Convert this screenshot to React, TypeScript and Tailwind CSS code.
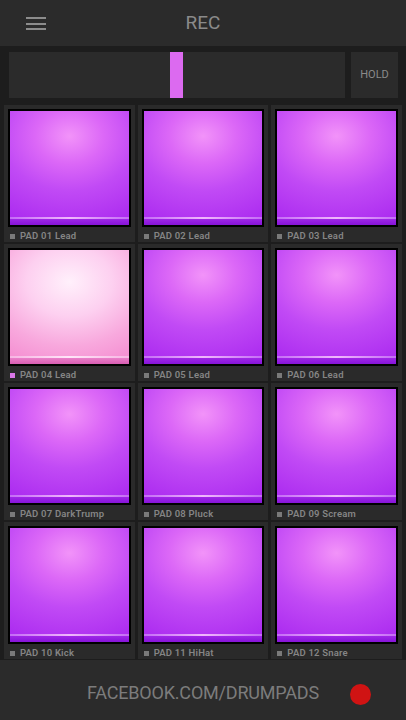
import React from 'react';

interface Pad {
  num: string;
  name: string;
  active?: boolean;
}

const pads: Pad[] = [
  { num: '01', name: 'Lead' },
  { num: '02', name: 'Lead' },
  { num: '03', name: 'Lead' },
  { num: '04', name: 'Lead', active: true },
  { num: '05', name: 'Lead' },
  { num: '06', name: 'Lead' },
  { num: '07', name: 'DarkTrump' },
  { num: '08', name: 'Pluck' },
  { num: '09', name: 'Scream' },
  { num: '10', name: 'Kick' },
  { num: '11', name: 'HiHat' },
  { num: '12', name: 'Snare' },
];

function PadCell({ pad }: { pad: Pad }) {
  return (
    <div className="flex h-[137px] flex-col bg-[#2a2a2a] px-[4px] pt-[4px]">
      <div className="flex h-[118px] flex-col border-2 border-black bg-black">
        {pad.active ? (
          <div className="flex flex-1 flex-col bg-[radial-gradient(ellipse_90%_75%_at_50%_28%,#fff0fb_0%,#fdd0f0_40%,#f8a8dd_75%,#f592d3_100%)]">
            <div className="flex-1" />
            <div className="h-[2px] bg-[linear-gradient(90deg,#f7b5e3,#ffe6f8_50%,#f7b5e3)]" />
            <div className="h-[6px] bg-[linear-gradient(#ea7fc9,#d85db2)]" />
          </div>
        ) : (
          <div className="flex flex-1 flex-col bg-[radial-gradient(ellipse_95%_80%_at_50%_22%,#f293f9_0%,#dc68f7_30%,#c14af5_60%,#ad2ef0_100%)]">
            <div className="flex-1" />
            <div className="h-[2px] bg-[linear-gradient(90deg,#c46cf6,#f0b8fc_50%,#c46cf6)]" />
            <div className="h-[6px] bg-[linear-gradient(#a026e8,#8614d8)]" />
          </div>
        )}
      </div>
      <div className="flex h-[15px] items-end gap-[5px] pb-[1px] pl-[2px]">
        <span
          className={
            pad.active
              ? 'mb-[2px] h-[5px] w-[5px] bg-[#d977e6]'
              : 'mb-[2px] h-[5px] w-[5px] bg-[#7a7a7a]'
          }
        />
        <span className="font-['Roboto',sans-serif] text-[9.5px] font-semibold leading-[10px] tracking-[0.2px] text-[#858585]">
          PAD {pad.num} {pad.name}
        </span>
      </div>
    </div>
  );
}

export default function App() {
  return (
    <div className="flex h-[720px] w-[406px] flex-col overflow-hidden bg-[#1d1d1d] font-['Roboto',sans-serif]">
      {/* header */}
      <div className="relative flex h-[46px] items-center justify-center bg-[#2b2b2b]">
        <div className="absolute left-[26px] top-[17px] flex w-[20px] flex-col gap-[3.5px]">
          <span className="h-[2px] bg-[#8c8c8c]" />
          <span className="h-[2px] bg-[#8c8c8c]" />
          <span className="h-[2px] bg-[#8c8c8c]" />
        </div>
        <span className="text-[19px] text-[#8a8a8a]">REC</span>
      </div>

      {/* slider + hold */}
      <div className="flex h-[58px] items-center gap-[6px] pl-[9px] pr-[8px]">
        <div className="flex h-[46px] w-[336px] bg-[#2b2b2b]">
          <div className="w-[161px]" />
          <div className="h-full w-[13px] bg-[#dc6af0]" />
        </div>
        <div className="flex h-[46px] flex-1 items-center justify-center bg-[#2b2b2b]">
          <span className="text-[11px] text-[#8a8a8a]">HOLD</span>
        </div>
      </div>

      {/* pads */}
      <div className="grid grid-cols-3 gap-x-[3px] gap-y-[2px] px-[4px] pt-[1px]">
        {pads.map((p) => (
          <PadCell key={p.num} pad={p} />
        ))}
      </div>

      {/* footer */}
      <div className="relative mt-auto flex h-[60px] items-center justify-center bg-[#2b2b2b]">
        <span className="pt-[4px] text-[18px] tracking-[-0.2px] text-[#7c7c7c]">FACEBOOK.COM/DRUMPADS</span>
        <span className="absolute left-[350px] top-[24px] h-[21px] w-[21px] rounded-full bg-[#d01313]" />
      </div>
    </div>
  );
}
